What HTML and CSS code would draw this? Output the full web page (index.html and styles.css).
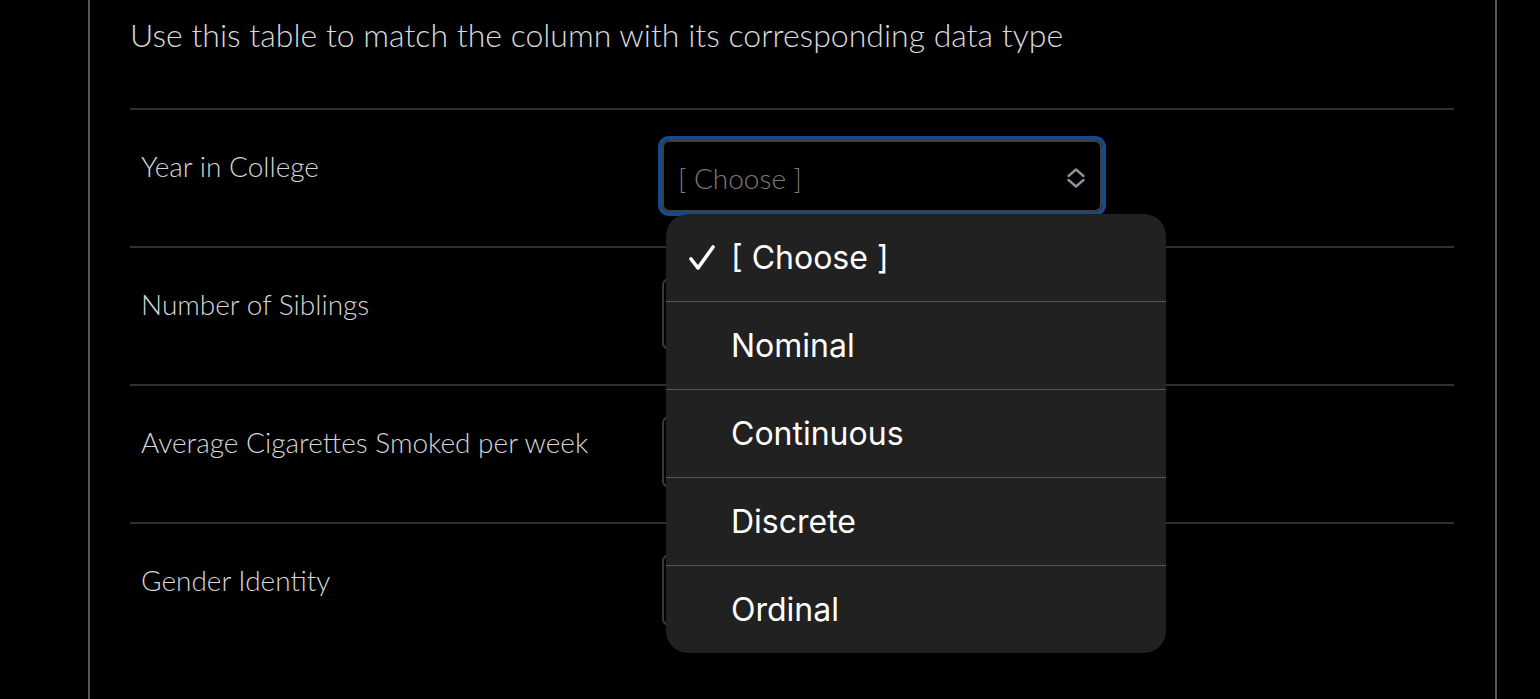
FILE: index.html
```html
<!DOCTYPE html>
<html lang="en">
<head>
<meta charset="utf-8">
<title>Match columns</title>
<link rel="stylesheet" href="styles.css">
</head>
<body>
<div class="panel">
  <p class="intro">Use this table to match the column with its corresponding data type</p>
  <div class="table">
    <div class="row">
      <div class="label">Year in College</div>
      <div class="select-wrap">
        <div class="select focused">
          <span class="placeholder">[ Choose ]</span>
          <svg class="chev" width="20" height="22" viewBox="0 0 20 22"><path d="M2.5 9 L10 2.5 L17.5 9 M2.5 13 L10 19.5 L17.5 13" fill="none" stroke="#8b9397" stroke-width="2.4" stroke-linecap="round" stroke-linejoin="round"/></svg>
        </div>
        <ul class="menu">
          <li class="item selected"><svg class="check" width="28" height="28" viewBox="0 0 28 28"><path d="M3 15 L10 24 L25 3" fill="none" stroke="#fff" stroke-width="3.6" stroke-linecap="round" stroke-linejoin="round"/></svg><span>[ Choose ]</span></li>
          <li class="item"><span>Nominal</span></li>
          <li class="item"><span>Continuous</span></li>
          <li class="item"><span>Discrete</span></li>
          <li class="item"><span>Ordinal</span></li>
        </ul>
      </div>
    </div>
    <div class="row">
      <div class="label">Number of Siblings</div>
      <div class="select-wrap"><div class="select"></div></div>
    </div>
    <div class="row">
      <div class="label">Average Cigarettes Smoked per week</div>
      <div class="select-wrap"><div class="select"></div></div>
    </div>
    <div class="row">
      <div class="label">Gender Identity</div>
      <div class="select-wrap"><div class="select"></div></div>
    </div>
  </div>
</div>
</body>
</html>
```
FILE: styles.css
```css
html, body {
  margin: 0;
  padding: 0;
  background: #000;
  height: 699px;
  overflow: hidden;
}
.panel {
  box-sizing: border-box;
  margin-left: 88px;
  width: 1409px;
  height: 699px;
  border-left: 2px solid #565656;
  border-right: 2px solid #565656;
  padding: 16px 41px 0 40px;
  font-family: Lato, "Open Sans", sans-serif;
  font-weight: 300;
}
.intro {
  margin: 0 0 54px;
  font-size: 32px;
  line-height: 38px;
  color: #d8dadc;
  white-space: nowrap;
}
.row {
  box-sizing: border-box;
  height: 138px;
  border-top: 2px solid #2f2f2f;
  display: flex;
}
.label {
  width: 521px;
  padding: 39px 0 0 11px;
  font-size: 28px;
  line-height: 34px;
  color: #d4d6d8;
}
.select-wrap {
  position: relative;
  margin-top: 30px;
}
.select {
  box-sizing: border-box;
  width: 440px;
  height: 72px;
  border: 2px solid #3a3a3a;
  border-radius: 7px;
  display: flex;
  align-items: center;
  justify-content: space-between;
  padding: 0 14px 0 14px;
}
.select.focused {
  border-color: #3f3f3f;
  box-shadow: 0 0 0 4px #174a88;
}
.placeholder {
  font-size: 28px;
  color: #7a7a7a;
  line-height: 32px;
  margin-top: 4px;
}
.chev {
  display: block;
  margin-top: 3px;
}
.menu {
  position: absolute;
  left: 4px;
  top: 74px;
  width: 500px;
  margin: 0;
  padding: 0;
  list-style: none;
  background: #212121;
  border-radius: 22px;
  overflow: hidden;
  font-family: Inter, "Noto Sans", sans-serif;
  font-weight: 400;
  z-index: 2;
}
.item {
  height: 87px;
  display: flex;
  align-items: center;
  padding-left: 65px;
  position: relative;
  font-size: 32px;
  color: #fff;
  border-top: 1px solid #555;
}
.item:first-child {
  border-top: none;
}
.check {
  position: absolute;
  left: 22px;
  top: 30px;
}
```
